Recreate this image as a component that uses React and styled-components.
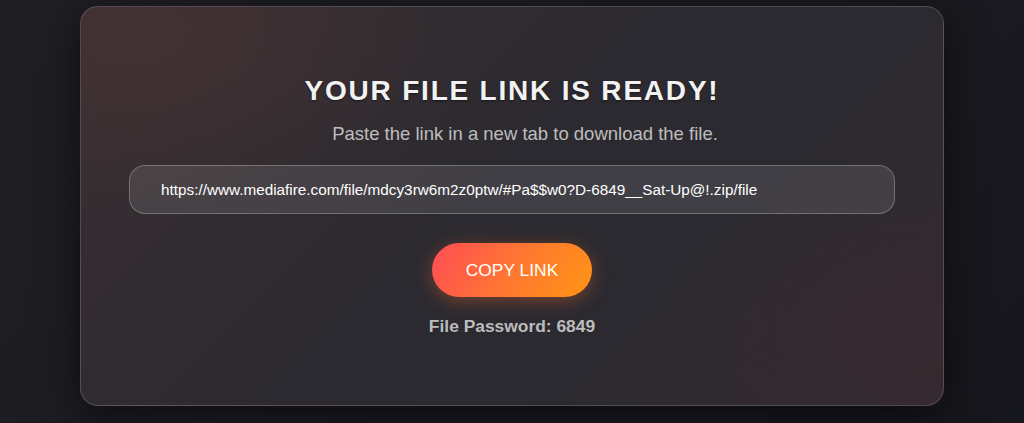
import React from "react";
import styled, { createGlobalStyle } from "styled-components";

const Global = createGlobalStyle`
  html, body { margin: 0; padding: 0; }
  body {
    background: linear-gradient(135deg, #1f1e23 0%, #1b1b21 50%, #16161d 100%);
    min-height: 423px;
    font-family: "Liberation Sans", Arial, sans-serif;
    overflow: hidden;
  }
`;

const Page = styled.div`
  display: flex;
  justify-content: center;
  padding-top: 6px;
  min-height: 423px;
  box-sizing: border-box;
`;

const Card = styled.div`
  width: 864px;
  height: 400px;
  box-sizing: border-box;
  border-radius: 18px;
  border: 1px solid rgba(255, 255, 255, 0.17);
  background:
    radial-gradient(ellipse 50% 60% at 8% 8%, rgba(78, 52, 52, 0.55), transparent 70%),
    radial-gradient(ellipse 40% 50% at 95% 80%, rgba(60, 40, 48, 0.55), transparent 70%),
    linear-gradient(135deg, #3a2f32 0%, #2c2a30 45%, #2b2a30 65%, #332a30 100%);
  box-shadow: 0 10px 40px rgba(0, 0, 0, 0.55);
  display: flex;
  flex-direction: column;
  align-items: center;
  padding: 67px 48px 0;
`;

const Title = styled.h1`
  margin: 0;
  font-size: 28px;
  line-height: 34px;
  font-weight: 700;
  letter-spacing: 1.8px;
  color: #f2f2f2;
  text-shadow: 0 1px 2px rgba(0, 0, 0, 0.5);
`;

const Subtitle = styled.p`
  margin: 15px 0 0;
  padding-left: 26px;
  font-size: 18.5px;
  line-height: 22px;
  color: #bdbdbd;
`;

const LinkBox = styled.div`
  margin-top: 20px;
  width: 766px;
  height: 49px;
  box-sizing: border-box;
  border-radius: 16px;
  border: 1px solid rgba(255, 255, 255, 0.25);
  background: rgba(255, 255, 255, 0.1);
  display: flex;
  align-items: center;
  padding: 0 31px;
  font-size: 15.3px;
  color: #ffffff;
  white-space: nowrap;
`;

const CopyButton = styled.button`
  margin-top: 29px;
  width: 160px;
  height: 54px;
  border: none;
  border-radius: 27px;
  background: linear-gradient(120deg, #ff4d55 0%, #ff7a2e 55%, #ff9414 100%);
  box-shadow: 0 4px 18px rgba(255, 110, 50, 0.35);
  color: #ffffff;
  font-family: "Liberation Sans", Arial, sans-serif;
  font-size: 17.4px;
  cursor: pointer;
`;

const Password = styled.div`
  margin-top: 19px;
  font-size: 17.4px;
  line-height: 20px;
  font-weight: 700;
  color: #bcbcbc;
`;

export default function App() {
  return (
    <>
      <Global />
      <Page>
        <Card>
          <Title>YOUR FILE LINK IS READY!</Title>
          <Subtitle>Paste the link in a new tab to download the file.</Subtitle>
          <LinkBox>https://www.mediafire.com/file/mdcy3rw6m2z0ptw/#Pa$$w0?D-6849__Sat-Up@!.zip/file</LinkBox>
          <CopyButton>COPY LINK</CopyButton>
          <Password>File Password: 6849</Password>
        </Card>
      </Page>
    </>
  );
}
